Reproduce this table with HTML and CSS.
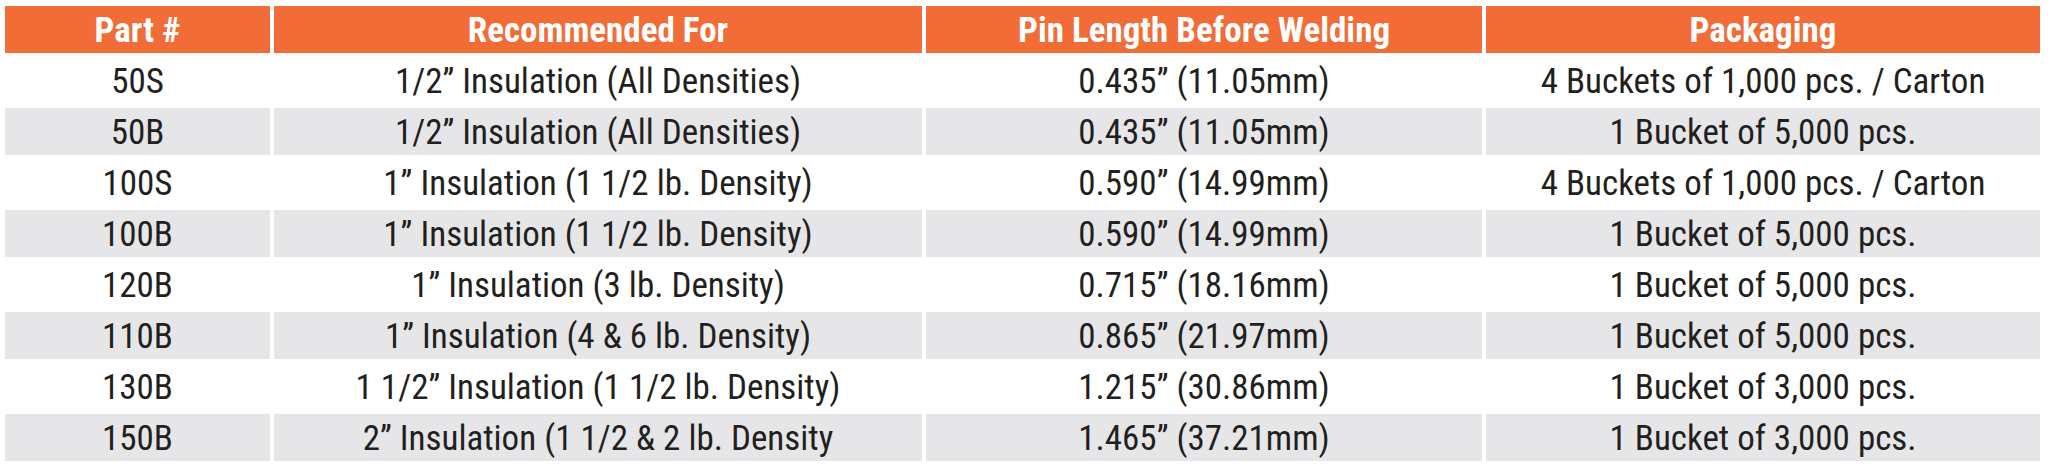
FILE: index.html
```html
<!DOCTYPE html>
<html>
<head>
<meta charset="utf-8">
<link rel="stylesheet" href="styles.css">
</head>
<body>
<table class="spec">
  <colgroup>
    <col class="c-part">
    <col class="c-rec">
    <col class="c-pin">
    <col class="c-pack">
  </colgroup>
  <thead>
    <tr class="head">
      <th>Part #</th>
      <th>Recommended For</th>
      <th>Pin Length Before Welding</th>
      <th>Packaging</th>
    </tr>
  </thead>
  <tbody>
    <tr><td>50S</td><td>1/2” Insulation (All Densities)</td><td>0.435” (11.05mm)</td><td>4 Buckets of 1,000 pcs. / Carton</td></tr>
    <tr class="alt"><td>50B</td><td>1/2” Insulation (All Densities)</td><td>0.435” (11.05mm)</td><td>1 Bucket of 5,000 pcs.</td></tr>
    <tr><td>100S</td><td>1” Insulation (1 1/2 lb. Density)</td><td>0.590” (14.99mm)</td><td>4 Buckets of 1,000 pcs. / Carton</td></tr>
    <tr class="alt"><td>100B</td><td>1” Insulation (1 1/2 lb. Density)</td><td>0.590” (14.99mm)</td><td>1 Bucket of 5,000 pcs.</td></tr>
    <tr><td>120B</td><td>1” Insulation (3 lb. Density)</td><td>0.715” (18.16mm)</td><td>1 Bucket of 5,000 pcs.</td></tr>
    <tr class="alt"><td>110B</td><td>1” Insulation (4 &amp; 6 lb. Density)</td><td>0.865” (21.97mm)</td><td>1 Bucket of 5,000 pcs.</td></tr>
    <tr><td>130B</td><td>1 1/2” Insulation (1 1/2 lb. Density)</td><td>1.215” (30.86mm)</td><td>1 Bucket of 3,000 pcs.</td></tr>
    <tr class="alt"><td>150B</td><td>2” Insulation (1 1/2 &amp; 2 lb. Density</td><td>1.465” (37.21mm)</td><td>1 Bucket of 3,000 pcs.</td></tr>
  </tbody>
</table>
</body>
</html>
```
FILE: styles.css
```css
html, body {
  margin: 0;
  padding: 0;
  background: #ffffff;
}

.spec {
  margin: 2px 0 0 1px;
  border-collapse: separate;
  border-spacing: 4px;
  table-layout: fixed;
  width: 2043px;
  font-family: "Roboto Condensed", Roboto, "Liberation Sans", sans-serif;
  font-stretch: condensed;
  font-size: 35px;
  color: #231f20;
}

.c-part { width: 265px; }
.c-rec { width: 648px; }
.c-pin { width: 556px; }
.c-pack { width: 554px; }

.spec tr {
  height: 47px;
}

.spec th,
.spec td {
  box-sizing: border-box;
  height: 47px;
  padding: 3px 0 0 0;
  text-align: center;
  vertical-align: middle;
  white-space: nowrap;
  line-height: 40px;
}

.spec th {
  background: #f26c37;
  color: #ffffff;
  font-weight: 700;
}

.spec td {
  font-weight: 400;
}

.spec .alt td {
  background: #e6e6e8;
}
```
